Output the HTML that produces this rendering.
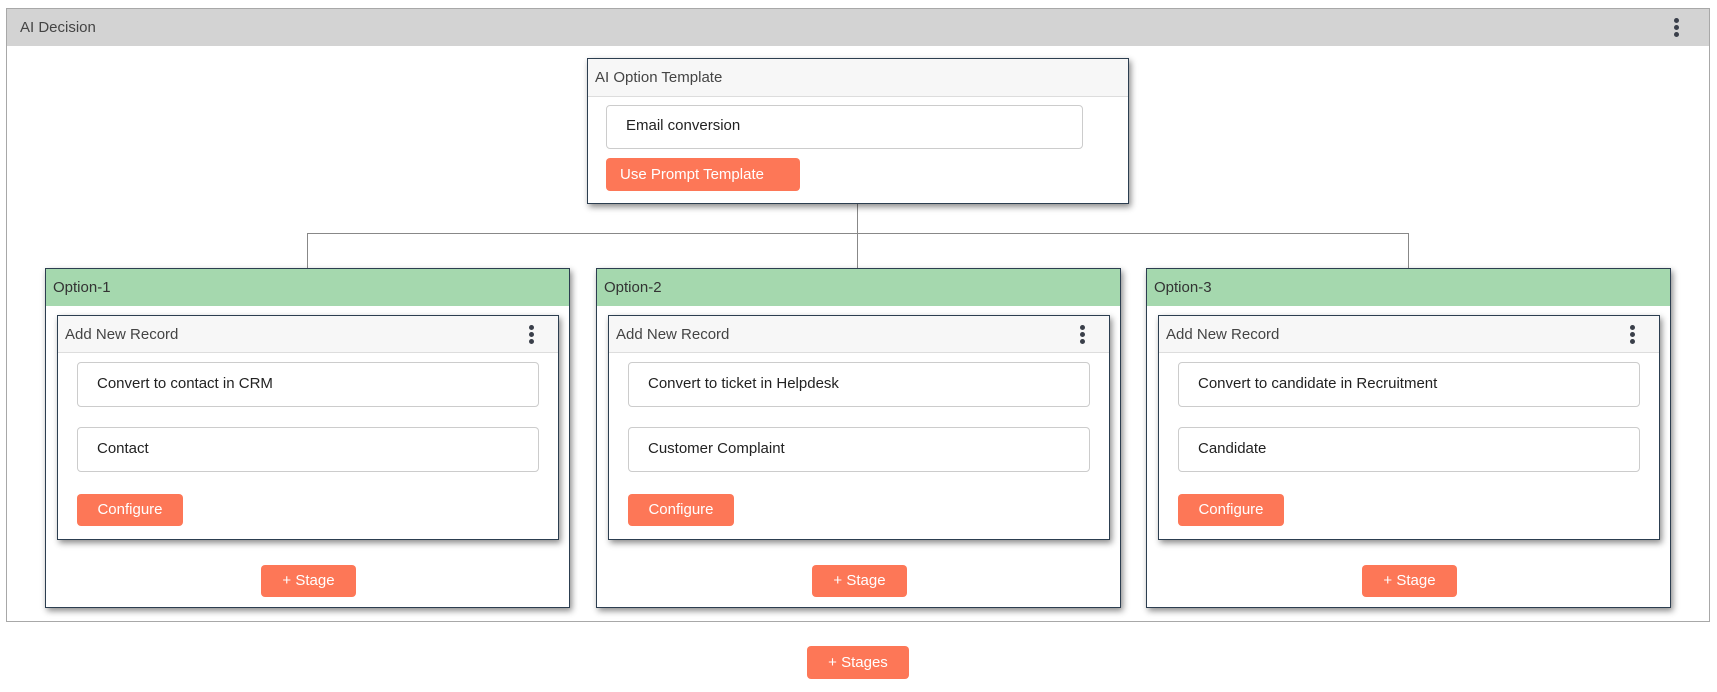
<!DOCTYPE html>
<html><head><style>
*{box-sizing:border-box;margin:0;padding:0}
body{width:1717px;height:692px;background:#fff;font-family:"Liberation Sans",sans-serif;position:relative;overflow:hidden;color:#333}
.abs{position:absolute}
.outer{left:6px;top:8px;width:1704px;height:614px;border:1px solid #a8a8a8}
.ohead{left:0;top:0;width:100%;height:37px;background:#d3d3d3;font-size:15px;line-height:37px;padding-left:13px;color:#444}
.card{border:1px solid #2c3e50;box-shadow:2px 3px 6px rgba(0,0,0,.45);background:#fff}
.hdr{background:#f7f7f7;border-bottom:1px solid #ddd;font-size:15px;color:#444;padding-left:7px}
.ghdr{background:#a5d8ae;font-size:15px;color:#333;padding-left:7px}
.inp{border:1px solid #ccc;border-radius:4px;font-size:15px;color:#222;padding-left:19px;background:#fff}
.btn{background:#fd7757;color:#fff;border-radius:4px;font-size:15px;text-align:center}
.line{background:#888}
.keb{width:5px;height:5px;border-radius:50%;background:#3a3f4a;position:absolute}
</style></head><body>
<div class="abs outer">
 <div class="abs ohead">AI Decision</div>
 <div class="keb" style="left:1667px;top:9px"></div><div class="keb" style="left:1667px;top:16px"></div><div class="keb" style="left:1667px;top:23px"></div>
</div>
<div class="abs line" style="left:857px;top:204px;width:1px;height:64px"></div>
<div class="abs line" style="left:307px;top:233px;width:1102px;height:1px"></div>
<div class="abs line" style="left:307px;top:233px;width:1px;height:35px"></div>
<div class="abs line" style="left:1408px;top:233px;width:1px;height:35px"></div>

<div class="abs card" style="left:587px;top:58px;width:542px;height:146px">
 <div class="hdr" style="height:38px;line-height:38px">AI Option Template</div>
 <div class="abs inp" style="left:18px;top:46px;width:477px;height:44px;line-height:40px">Email conversion</div>
 <div class="abs btn" style="left:18px;top:99px;width:194px;height:33px;line-height:33px;text-align:left;padding-left:14px">Use Prompt Template</div>
</div>

<div class="abs card" style="left:45px;top:268px;width:525px;height:340px">
 <div class="ghdr" style="height:37px;line-height:37px">Option-1</div>
 <div class="abs card" style="left:11px;top:46px;width:502px;height:225px">
  <div class="hdr" style="height:37px;line-height:37px">Add New Record</div>
  <div class="keb" style="left:471px;top:9px"></div><div class="keb" style="left:471px;top:16px"></div><div class="keb" style="left:471px;top:23px"></div>
  <div class="abs inp" style="left:19px;top:46px;width:462px;height:45px;line-height:41px">Convert to contact in CRM</div>
  <div class="abs inp" style="left:19px;top:111px;width:462px;height:45px;line-height:41px">Contact</div>
  <div class="abs btn" style="left:19px;top:178px;width:106px;height:32px;line-height:32px">Configure</div>
 </div>
 <div class="abs btn" style="left:215px;top:296px;width:95px;height:32px;line-height:32px">+ Stage</div>
</div>
<div class="abs card" style="left:596px;top:268px;width:525px;height:340px">
 <div class="ghdr" style="height:37px;line-height:37px">Option-2</div>
 <div class="abs card" style="left:11px;top:46px;width:502px;height:225px">
  <div class="hdr" style="height:37px;line-height:37px">Add New Record</div>
  <div class="keb" style="left:471px;top:9px"></div><div class="keb" style="left:471px;top:16px"></div><div class="keb" style="left:471px;top:23px"></div>
  <div class="abs inp" style="left:19px;top:46px;width:462px;height:45px;line-height:41px">Convert to ticket in Helpdesk</div>
  <div class="abs inp" style="left:19px;top:111px;width:462px;height:45px;line-height:41px">Customer Complaint</div>
  <div class="abs btn" style="left:19px;top:178px;width:106px;height:32px;line-height:32px">Configure</div>
 </div>
 <div class="abs btn" style="left:215px;top:296px;width:95px;height:32px;line-height:32px">+ Stage</div>
</div>
<div class="abs card" style="left:1146px;top:268px;width:525px;height:340px">
 <div class="ghdr" style="height:37px;line-height:37px">Option-3</div>
 <div class="abs card" style="left:11px;top:46px;width:502px;height:225px">
  <div class="hdr" style="height:37px;line-height:37px">Add New Record</div>
  <div class="keb" style="left:471px;top:9px"></div><div class="keb" style="left:471px;top:16px"></div><div class="keb" style="left:471px;top:23px"></div>
  <div class="abs inp" style="left:19px;top:46px;width:462px;height:45px;line-height:41px">Convert to candidate in Recruitment</div>
  <div class="abs inp" style="left:19px;top:111px;width:462px;height:45px;line-height:41px">Candidate</div>
  <div class="abs btn" style="left:19px;top:178px;width:106px;height:32px;line-height:32px">Configure</div>
 </div>
 <div class="abs btn" style="left:215px;top:296px;width:95px;height:32px;line-height:32px">+ Stage</div>
</div>

<div class="abs btn" style="left:807px;top:646px;width:102px;height:33px;line-height:33px">+ Stages</div>
</body></html>
